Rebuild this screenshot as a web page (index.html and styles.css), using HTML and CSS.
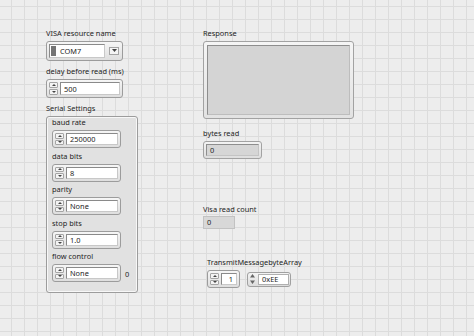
FILE: index.html
```html
<!DOCTYPE html>
<html lang="en">
<head>
    <meta charset="UTF-8">
    <title>Serial Front Panel</title>
    <link rel="stylesheet" href="styles.css">
</head>
<body>
    <div class="panel">
        <div class="col-left">
            <div class="label">VISA resource name</div>
            <div class="ctrl visa">
                <div class="field"><span class="visa-strip"></span>COM7</div>
                <span class="drop"><svg width="5" height="4" viewBox="0 0 5 4"><path d="M0 0h5L2.5 3z" fill="#444"/></svg></span>
            </div>

            <div class="label gap">delay before read (ms)</div>
            <div class="ctrl">
                <div class="spin"><span class="up"></span><span class="down"></span></div>
                <div class="field">500</div>
            </div>

            <div class="label gap">Serial Settings</div>
            <div class="cluster">
                <div class="label">baud rate</div>
                <div class="ctrl small">
                    <div class="spin"><span class="up"></span><span class="down"></span></div>
                    <div class="field">250000</div>
                </div>
                <div class="label gap">data bits</div>
                <div class="ctrl small">
                    <div class="spin"><span class="up"></span><span class="down"></span></div>
                    <div class="field">8</div>
                </div>
                <div class="label gap">parity</div>
                <div class="ctrl small">
                    <div class="spin"><span class="up"></span><span class="down"></span></div>
                    <div class="field">None</div>
                </div>
                <div class="label gap">stop bits</div>
                <div class="ctrl small">
                    <div class="spin"><span class="up"></span><span class="down"></span></div>
                    <div class="field">1.0</div>
                </div>
                <div class="label gap">flow control</div>
                <div class="row">
                    <div class="ctrl small">
                        <div class="spin"><span class="up"></span><span class="down"></span></div>
                        <div class="field">None</div>
                    </div>
                    <span class="enum-val">0</span>
                </div>
            </div>
        </div>

        <div class="col-right">
            <div class="label">Response</div>
            <div class="string-ind">
                <div class="string-inner"></div>
            </div>

            <div class="label bytes-label">bytes read</div>
            <div class="num-ind">
                <div class="num-inner">0</div>
            </div>

            <div class="label count-label">Visa read count</div>
            <div class="flat-ind">0</div>

            <div class="array-box">
                <div class="label">TransmitMessagebyteArray</div>
                <div class="array-row">
                    <div class="ctrl index">
                        <div class="spin"><span class="up"></span><span class="down"></span></div>
                        <div class="field right">1</div>
                    </div>
                    <div class="element">
                        <div class="vspin">
                            <svg width="5" height="12" viewBox="0 0 5 12"><path d="M0 4.5L2.5 1 5 4.5z M0 7.5L2.5 11 5 7.5z" fill="#666"/></svg>
                        </div>
                        <div class="field">0xEE</div>
                    </div>
                </div>
            </div>
        </div>
    </div>
</body>
</html>
```

FILE: styles.css
```css
* {
    box-sizing: border-box;
}
body {
    margin: 0;
    width: 474px;
    height: 336px;
    overflow: hidden;
    font-family: 'Noto Sans', 'Liberation Sans', sans-serif;
    font-size: 7.4px;
    color: #1e1e1e;
    background-color: #ededed;
    background-image:
        linear-gradient(to right, #dcdcdc 1px, transparent 1px),
        linear-gradient(to bottom, #dcdcdc 1px, transparent 1px);
    background-size: 13px 13px;
    background-position: 11px 6px;
}
.panel {
    display: flex;
    padding: 27px 0 0 46px;
}
.col-left {
    width: 92px;
}
.col-right {
    margin-left: 65px;
    display: flex;
    flex-direction: column;
    align-items: flex-start;
}
.label {
    height: 12px;
    line-height: 12px;
    white-space: nowrap;
    margin-bottom: 2px;
}
.label.gap {
    margin-top: 4px;
}
.ctrl {
    display: flex;
    align-items: stretch;
    gap: 2px;
    width: 77px;
    height: 19px;
    padding: 2px;
    border: 1px solid #9c9c9c;
    border-radius: 3px;
    background: linear-gradient(#f6f6f6, #dedede);
}
.ctrl.visa {
    height: 20px;
}
.ctrl.small {
    width: 69px;
}
.field {
    flex: 1;
    display: flex;
    align-items: center;
    padding-left: 3px;
    background: #fff;
    border: 1px solid #8a8a8a;
    border-right-color: #c8c8c8;
    border-bottom-color: #c8c8c8;
    white-space: nowrap;
    overflow: hidden;
}
.field.right {
    justify-content: flex-end;
    padding-right: 3px;
}
.visa-strip {
    width: 5px;
    align-self: stretch;
    margin: 1px 4px 1px -2px;
    background: #757575;
}
.drop {
    width: 10px;
    margin: 3px 1px 3px 2px;
    display: flex;
    align-items: center;
    justify-content: center;
    background: #f4f4f4;
    border: 1px solid #a4a4a4;
}
.spin {
    width: 9px;
    display: flex;
    flex-direction: column;
    gap: 1px;
}
.spin span {
    flex: 1;
    position: relative;
    background: #f3f3f3;
    border: 1px solid #a4a4a4;
    border-radius: 1px;
}
.spin span::after {
    content: '';
    position: absolute;
    left: 50%;
    top: 50%;
    margin-left: -2px;
    border-left: 2px solid transparent;
    border-right: 2px solid transparent;
}
.spin .up::after {
    margin-top: -1px;
    border-bottom: 2px solid #444;
}
.spin .down::after {
    margin-top: -1px;
    border-top: 2px solid #444;
}
.cluster {
    width: 92px;
    height: 177px;
    padding: 0 0 0 5px;
    border: 1px solid #9c9c9c;
    border-radius: 3px;
    background: #e1e1e1;
    box-shadow: inset 0 0 0 1px #f7f7f7;
}
.cluster .label {
    height: 11px;
    line-height: 11px;
}
.cluster .label.gap {
    margin-top: 2.5px;
}
.cluster .ctrl.small {
    height: 18px;
}
.row {
    display: flex;
    align-items: center;
    gap: 4px;
}
.enum-val {
    padding-top: 2px;
}
.string-ind {
    width: 151px;
    height: 78px;
    padding: 3px;
    border: 1px solid #a2a2a2;
    border-radius: 3px;
    background: linear-gradient(#f5f5f5, #e2e2e2);
}
.string-inner {
    height: 100%;
    background: #d4d4d4;
    border: 1px solid #8e8e8e;
    border-right-color: #bdbdbd;
    border-bottom-color: #bdbdbd;
}
.bytes-label {
    margin-top: 8px;
}
.num-ind {
    width: 59px;
    height: 18px;
    padding: 2px;
    border: 1px solid #a2a2a2;
    border-radius: 3px;
    background: linear-gradient(#f3f3f3, #dedede);
}
.num-inner {
    height: 100%;
    display: flex;
    align-items: center;
    padding-left: 3px;
    background: #d6d6d6;
    border: 1px solid #8e8e8e;
    border-right-color: #c4c4c4;
    border-bottom-color: #c4c4c4;
}
.count-label {
    margin-top: 44px;
    margin-bottom: 1px;
}
.flat-ind {
    width: 32px;
    height: 13px;
    line-height: 11px;
    padding-left: 3px;
    background: #d8d8d8;
    border: 1px solid #c2c2c2;
}
.array-box {
    margin-top: 27px;
    margin-left: 4px;
}
.array-row {
    display: flex;
    align-items: center;
    gap: 7px;
}
.ctrl.index {
    width: 33px;
    height: 18px;
}
.element {
    display: flex;
    align-items: stretch;
    gap: 2px;
    width: 44px;
    height: 15px;
    padding: 1px;
    border: 1px solid #a0a0a0;
    border-radius: 3px;
    background: linear-gradient(#f4f4f4, #dcdcdc);
}
.vspin {
    width: 7px;
    display: flex;
    align-items: center;
    justify-content: center;
}
.element .field {
    border-color: #b0b0b0;
}
```
